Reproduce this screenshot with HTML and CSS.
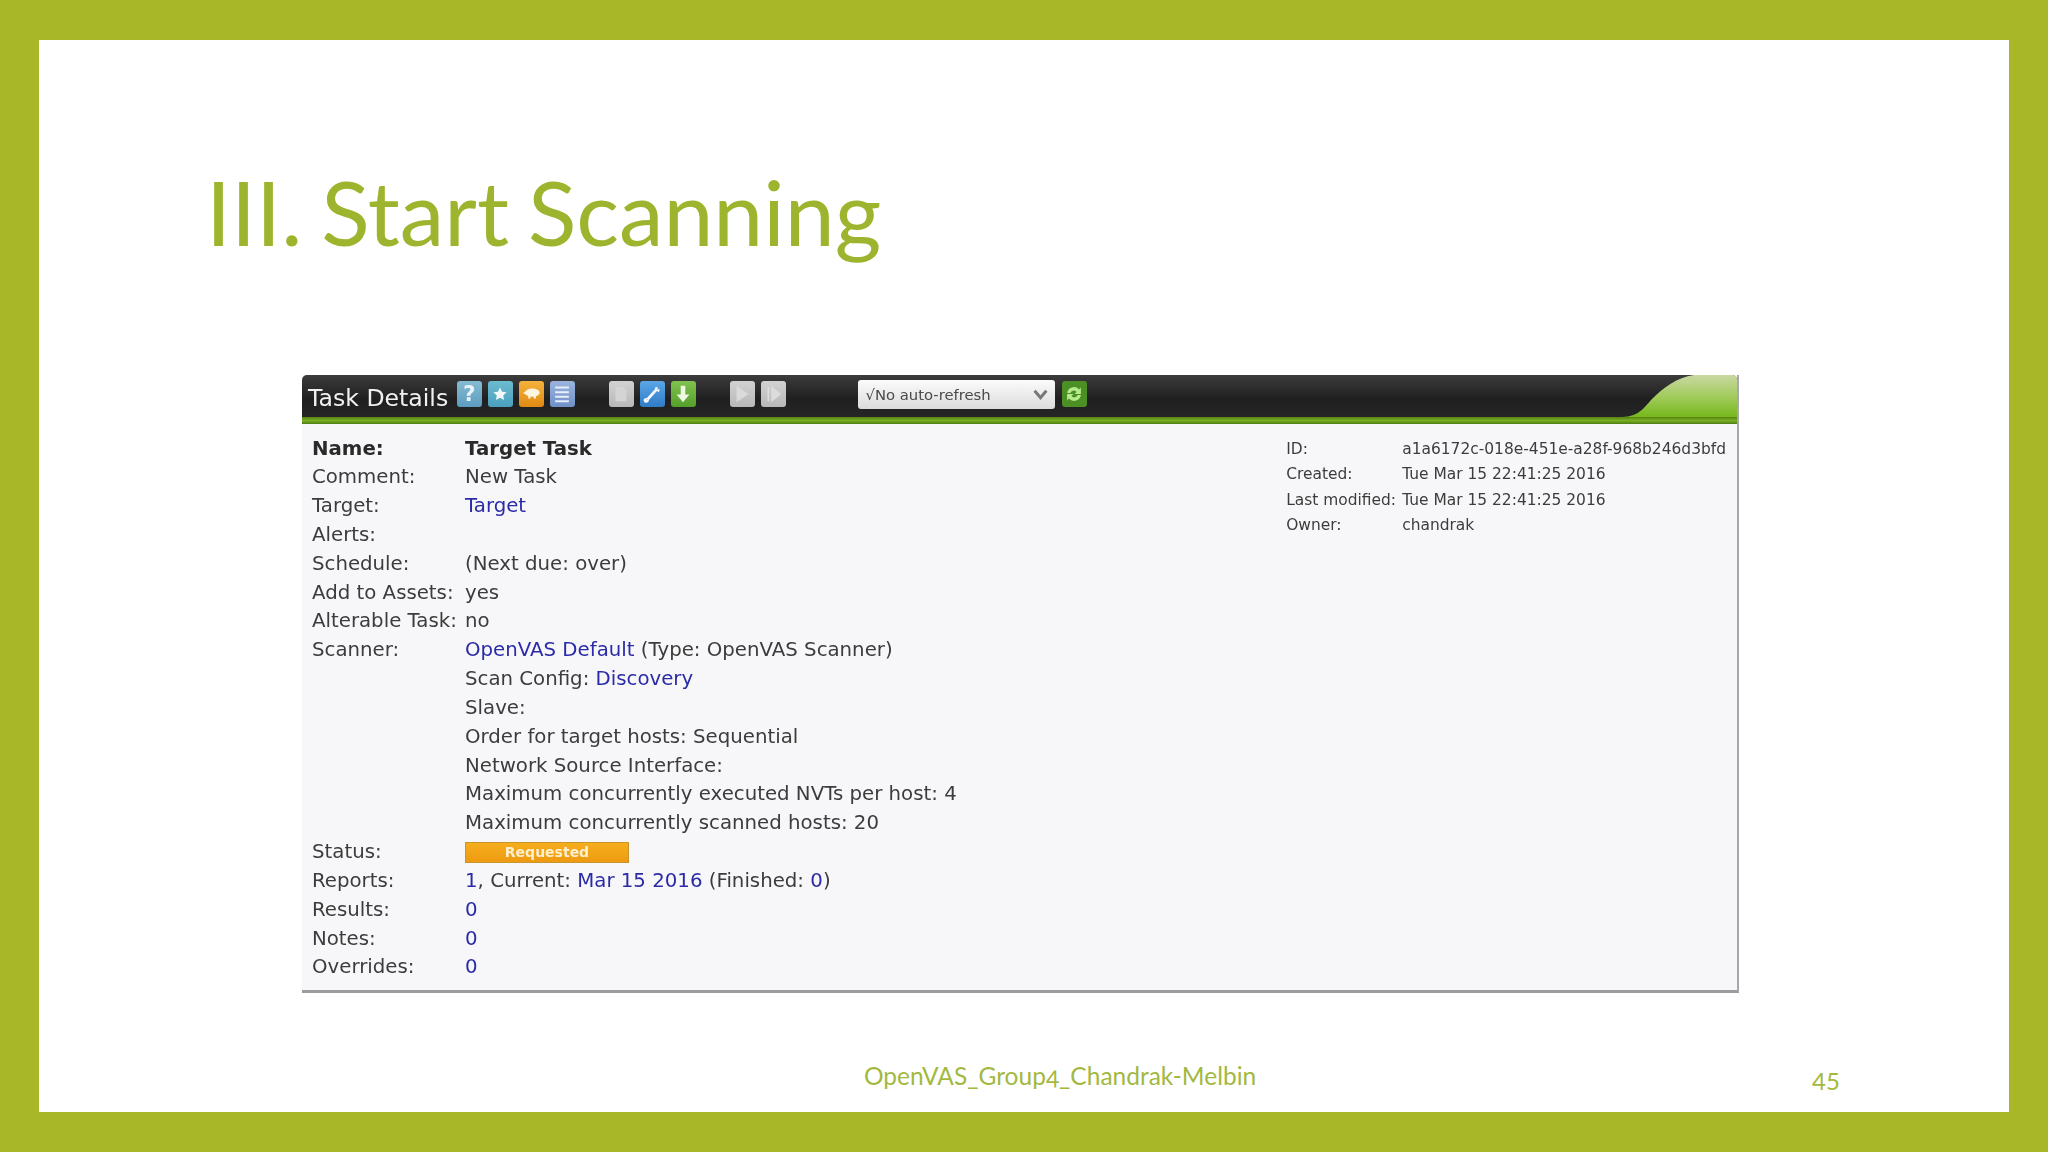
FILE: index.html
```html
<!DOCTYPE html>
<html lang="en">
<head>
<meta charset="utf-8">
<title>III. Start Scanning</title>
<link rel="stylesheet" href="styles.css">
</head>
<body>
<div class="slide">
  <h1 class="title">III. Start Scanning</h1>
  <section class="panel">
    <header class="bar">
      <span class="bar-title">Task Details</span>
      <div class="tools">
        <div class="tool-group">
          <span class="tool t-blue">?</span>
          <span class="tool t-teal"><svg viewBox="0 0 24 24"><path d="M12 5l2.200 4.600 5 .6-3.700 3.400 1 5L12 16.200 7.500 18.600l1-5L4.800 10.200l5-.6z" fill="#f2f8fa"/></svg></span>
          <span class="tool t-orange"><svg viewBox="0 0 24 24"><ellipse cx="13.500" cy="10.500" rx="8" ry="4.600" fill="#fff6e0"/><path d="M3 11l6-2.500v5zM9 13h2.400v4H9zM15 13h2.400v4H15z" fill="#fff6e0"/></svg></span>
          <span class="tool t-slate"><svg viewBox="0 0 24 24"><path d="M4.500 5h15M4.500 10h15M4.500 15h15M4.500 20h15" stroke="#e6eefa" stroke-width="2.200"/></svg></span>
        </div>
        <div class="tool-group">
          <span class="tool t-gray"><svg viewBox="0 0 24 24"><path d="M6 4h8l4 4v12H6z" fill="#d4d4d4"/></svg></span>
          <span class="tool t-sky"><svg viewBox="0 0 24 24"><path d="M7 18L17 7" stroke="#f4f9ff" stroke-width="3"/><path d="M15 5.500a2.200 2.200 0 0 1 3.300-.5l-.5 2 2-.5a2.200 2.200 0 0 1-1 3.500zM4.500 16.500l2-.2-.2 2 2-.2a2.200 2.200 0 0 1-1.800 3.200 2.600 2.600 0 0 1-2-4.800z" fill="#f4f9ff"/></svg></span>
          <span class="tool t-green"><svg viewBox="0 0 24 24"><path d="M9.500 3h5v9.500h4.500L12 21l-7-8.500h4.500z" fill="#eef8e4"/></svg></span>
        </div>
        <div class="tool-group tool-group-last">
          <span class="tool t-gray"><svg viewBox="0 0 24 24"><path d="M6 3l13 9-13 9z" fill="#dadada"/></svg></span>
          <span class="tool t-gray"><svg viewBox="0 0 24 24"><path d="M6 4h2v16H6zM10 3l11 9-11 9z" fill="#dcdcdc"/></svg></span>
        </div>
        <div class="refresh-select">√No auto-refresh<svg class="chev" viewBox="0 0 14 10"><path d="M1.500 1.500L7 8l5.500-6.500" fill="none" stroke="#777" stroke-width="2.800"/></svg></div>
        <span class="tool t-refresh"><svg viewBox="0 0 24 24"><path d="M4.500 11a7.500 7.500 0 0 1 13-4l2-2v7h-7l2.300-2.300a4 4 0 0 0-6.800 1.300zM19.500 13a7.500 7.500 0 0 1-13 4l-2 2v-7h7l-2.300 2.300a4 4 0 0 0 6.800-1.300z" fill="#b6ea8c"/></svg></span>
      </div>
      <svg class="swoosh" viewBox="0 0 115 42" preserveAspectRatio="none"><defs><linearGradient id="sw" x1="0" y1="0" x2="0" y2="1"><stop offset="0" stop-color="#c9d9a2"/><stop offset=".55" stop-color="#9fca58"/><stop offset="1" stop-color="#76b81c"/></linearGradient></defs><path d="M0 42C18 42 24 30 30 24 40 14 55 2 72 0H110Q115 0 115 5V42z" fill="url(#sw)"/></svg>
    </header>
    <div class="body">
      <div class="details">
        <div class="row strong"><span class="label">Name:</span><span>Target Task</span></div>
        <div class="row"><span class="label">Comment:</span><span>New Task</span></div>
        <div class="row"><span class="label">Target:</span><span><a>Target</a></span></div>
        <div class="row"><span class="label">Alerts:</span><span></span></div>
        <div class="row"><span class="label">Schedule:</span><span>(Next due: over)</span></div>
        <div class="row"><span class="label">Add to Assets:</span><span>yes</span></div>
        <div class="row"><span class="label">Alterable Task:</span><span>no</span></div>
        <div class="row"><span class="label">Scanner:</span><span><a>OpenVAS Default</a> (Type: OpenVAS Scanner)</span></div>
        <div class="row"><span class="label"></span><span>Scan Config: <a>Discovery</a></span></div>
        <div class="row"><span class="label"></span><span>Slave:</span></div>
        <div class="row"><span class="label"></span><span>Order for target hosts: Sequential</span></div>
        <div class="row"><span class="label"></span><span>Network Source Interface:</span></div>
        <div class="row"><span class="label"></span><span>Maximum concurrently executed NVTs per host: 4</span></div>
        <div class="row"><span class="label"></span><span>Maximum concurrently scanned hosts: 20</span></div>
        <div class="row"><span class="label">Status:</span><span class="status">Requested</span></div>
        <div class="row"><span class="label">Reports:</span><span><a>1</a>, Current: <a>Mar 15 2016</a> (Finished: <a>0</a>)</span></div>
        <div class="row"><span class="label">Results:</span><span><a>0</a></span></div>
        <div class="row"><span class="label">Notes:</span><span><a>0</a></span></div>
        <div class="row"><span class="label">Overrides:</span><span><a>0</a></span></div>
      </div>
      <div class="meta">
        <span>ID:</span><span>a1a6172c-018e-451e-a28f-968b246d3bfd</span>
        <span>Created:</span><span>Tue Mar 15 22:41:25 2016</span>
        <span>Last modified:</span><span>Tue Mar 15 22:41:25 2016</span>
        <span>Owner:</span><span>chandrak</span>
      </div>
    </div>
  </section>
  <footer class="foot">
    <span class="foot-text">OpenVAS_Group4_Chandrak-Melbin</span>
    <span class="foot-num">45</span>
  </footer>
</div>
</body>
</html>
```
FILE: styles.css
```css
* { box-sizing: border-box; }
html, body { margin: 0; height: 100%; }
body { width: 2048px; height: 1152px; overflow: hidden; background: #a7b727; }
.slide {
  margin: 40px 39px;
  height: 1072px;
  background: #fff;
  padding: 0 0 0 263px;
  display: flex;
  flex-direction: column;
  font-family: "DejaVu Sans", sans-serif;
}
.title {
  margin: 127px 0 0 -96px;
  font: 400 89.500px/1 Lato, sans-serif;
  word-spacing: -4px;
  color: #9db52e;
  height: 208px;
}
.panel {
  width: 1437px;
  height: 618px;
  background: #f7f7f9;
  border-right: 2px solid #a8a8ac;
  border-bottom: 3px solid #9c9ca0;
  filter: blur(0.6px);
  display: flex;
  flex-direction: column;
}
.bar {
  height: 49px;
  flex: none;
  background: linear-gradient(#3c3c3c, #1f1f1f 50%, #262626 85.500%, #567f12 85.500%, #78b024 93%, #4f7c16 100%);
  border-radius: 5px 5px 0 0;
  display: flex;
  align-items: center;
  position: relative;
  color: #f0f0f0;
}
.bar-title { font-size: 23.600px; width: 154.500px; padding-left: 6px; margin-top: -3px; white-space: nowrap; }
.tools { display: flex; align-items: center; margin-top: -11px; }
.tool-group { display: flex; gap: 5.500px; margin-right: 33.500px; }
.tool-group-last { margin-right: 71.500px; }
.tool {
  width: 25.500px; height: 26px; border-radius: 3px; display: flex; align-items: center; justify-content: center;
  color: #eaf4f8; font-size: 21px; font-weight: 700; flex: none;
}
.tool svg { width: 22px; height: 22px; display: block; }
.t-blue { background: linear-gradient(#86bcd2, #5c9cc0); }
.t-teal { background: linear-gradient(#6cbcd0, #4a9fbd); }
.t-orange { background: linear-gradient(#f4b23c, #e08a14); }
.t-slate { background: linear-gradient(#9bb4de, #6f90c8); }
.t-gray { background: linear-gradient(#d2d2d2, #b8b8b8); }
.t-sky { background: linear-gradient(#5aa6e6, #2f7cc8); }
.t-green { background: linear-gradient(#80c250, #559f2a); }
.t-refresh { background: #4c8f25; margin-left: 7px; }
.refresh-select {
  width: 197px; height: 29px;
  background: linear-gradient(#fbfbfb, #dcdcdc);
  border-radius: 3px;
  color: #4a4a4a; font-size: 14.800px; line-height: 29px; padding-left: 8px;
  position: relative;
  white-space: nowrap;
}
.chev { position: absolute; right: 7px; top: 9px; width: 15px; height: 11px; }
.swoosh { position: absolute; right: 0; top: 0; width: 115px; height: 42px; }
.body { flex: 1; display: flex; justify-content: space-between; padding: 10.500px 11px 0 10px; color: #3c3c3c; }
.details { font-size: 19.750px; }
.row { display: grid; grid-template-columns: 153px auto; height: 28.830px; line-height: 28.830px; white-space: nowrap; }
.strong { font-weight: 700; color: #2a2a2a; }
a { color: #2b2ba8; }
.status {
  width: 164px; height: 21px; margin-top: 4px;
  background: linear-gradient(#f6ae1c, #ee9a12);
  border: 1px solid #c8962c;
  color: #fff0d0; font-size: 14px; font-weight: 700; line-height: 18px; text-align: center;
}
.meta {
  display: grid; grid-template-columns: 116px auto; grid-auto-rows: 25.600px;
  align-content: start; font-size: 15.450px; line-height: 25.600px; margin-top: 2px; white-space: nowrap;
}
.foot { margin-left: -263px; flex: 1; position: relative; color: #a3b83f; font-family: Lato, sans-serif; }
.foot-text { position: absolute; left: 825px; top: 68px; font-size: 24.500px; white-space: nowrap; font-variant-numeric: oldstyle-nums; }
.foot-num { position: absolute; left: 1773px; top: 73px; font-size: 24px; }
```
